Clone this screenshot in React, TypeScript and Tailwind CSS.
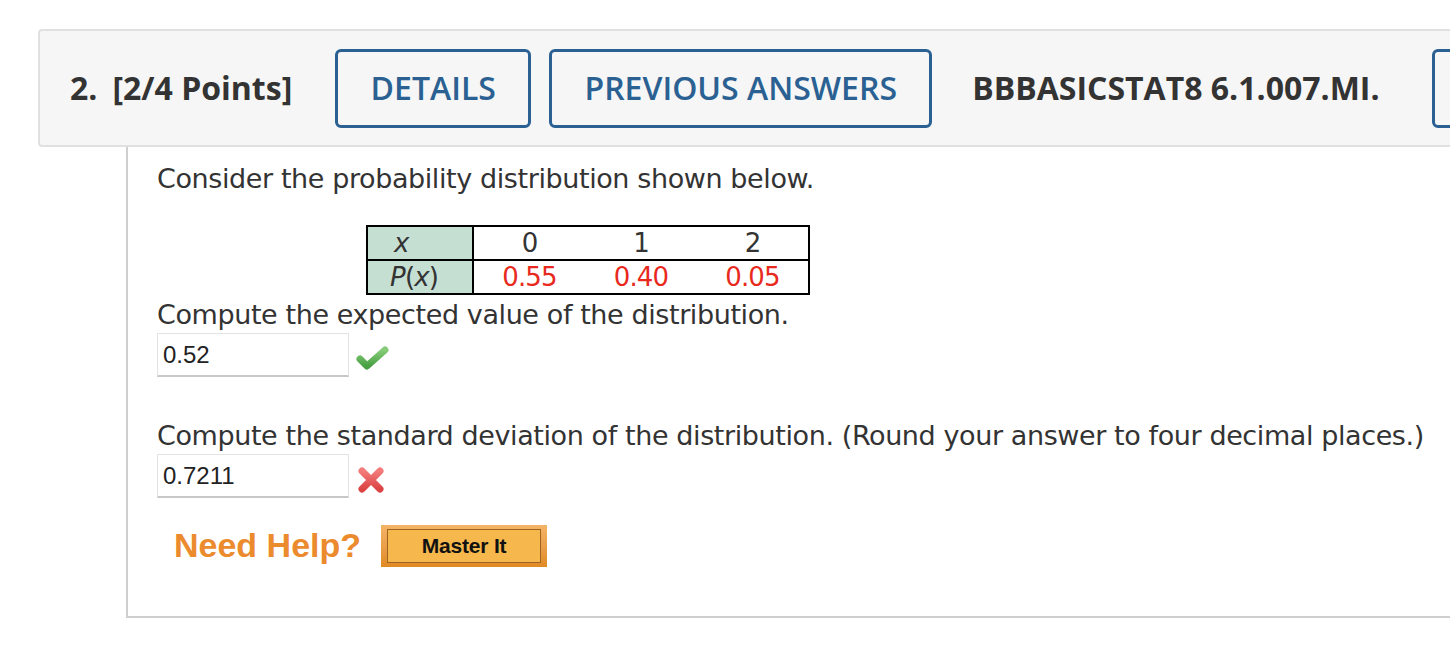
import React from "react";

const body = { fontFamily: '"DejaVu Sans", Verdana, sans-serif' };
const head = { fontFamily: '"Open Sans", "Liberation Sans", sans-serif' };
const arial = { fontFamily: '"Liberation Sans", Arial, sans-serif' };

function Check() {
  return (
    <svg width="34" height="28" viewBox="0 0 34 28">
      <defs>
        <linearGradient id="g" x1="0" y1="0" x2="0" y2="1">
          <stop offset="0" stopColor="#86cc78" />
          <stop offset="1" stopColor="#48a043" />
        </linearGradient>
      </defs>
      <path d="M4 14 L11 21 L29 5" fill="none" stroke="url(#g)" strokeWidth="7" strokeLinecap="round" strokeLinejoin="round" />
    </svg>
  );
}

function Cross() {
  return (
    <svg width="30" height="30" viewBox="0 0 30 30">
      <defs>
        <linearGradient id="r" x1="0" y1="0" x2="0" y2="1">
          <stop offset="0" stopColor="#f37b7b" />
          <stop offset="1" stopColor="#dc4444" />
        </linearGradient>
      </defs>
      <path d="M6 6 L24 24 M24 6 L6 24" fill="none" stroke="url(#r)" strokeWidth="7" strokeLinecap="round" />
    </svg>
  );
}

function Answer({ value, mark }: { value: string; mark: React.ReactNode }) {
  return (
    <div className="flex items-center gap-[7px]">
      <div
        className="w-[192px] h-[44px] border border-[#e3e3e3] border-b-2 border-b-[#c8c8c8] flex items-center pl-[5px] text-[24px] text-[#222]"
        style={arial}
      >
        {value}
      </div>
      <div className="mt-[8px]">{mark}</div>
    </div>
  );
}

export default function App() {
  return (
    <div className="w-[1450px] h-[646px] overflow-hidden bg-white relative">
      <div
        className="ml-[38px] mt-[29px] w-[1480px] h-[118px] bg-[#f6f6f6] border-2 border-[#e0e0e0] rounded-[4px] flex items-center whitespace-nowrap"
        style={head}
      >
        <div className="shrink-0 ml-[30px] text-[32px] font-bold text-[#333] flex gap-[15px]">
          <span>2.</span>
          <span>[2/4 Points]</span>
        </div>
        <div className="shrink-0 ml-[43px] w-[196px] h-[79px] border-[3px] border-[#2a6192] rounded-[6px] flex items-center justify-center text-[32px] font-semibold text-[#2a6192]">
          DETAILS
        </div>
        <div className="shrink-0 ml-[18px] w-[383px] h-[79px] border-[3px] border-[#2a6192] rounded-[6px] flex items-center justify-center text-[32px] font-semibold text-[#2a6192]">
          PREVIOUS ANSWERS
        </div>
        <div className="shrink-0 ml-[40px] text-[32px] font-bold text-[#333]">
          BBBASICSTAT8 6.1.007.MI.
        </div>
        <div className="shrink-0 ml-[52px] w-[120px] h-[79px] border-[3px] border-[#2a6192] rounded-[6px]" />
      </div>
      <div className="ml-[126px] w-[1400px] h-[471px] border-l-2 border-b-2 border-[#cfcfcf] pl-[29px] pt-[16px] text-[#333]" style={body}>
        <div className="text-[27px] leading-[32px] tracking-[-0.4px]">Consider the probability distribution shown below.</div>
        <table className="ml-[209px] mt-[30px] border-collapse border-2 border-black text-[26px] leading-[32px] tracking-[-0.8px]">
          <tbody>
            <tr>
              <td className="w-[106px] bg-[#c6dfd3] border-r-2 border-b-2 border-black pl-[26px] italic">x</td>
              <td className="w-[112px] text-center border-b-2 border-black">0</td>
              <td className="w-[112px] text-center border-b-2 border-black">1</td>
              <td className="w-[112px] text-center border-b-2 border-black">2</td>
            </tr>
            <tr>
              <td className="bg-[#c6dfd3] border-r-2 border-black pl-[22px]"><i>P</i>(<i>x</i>)</td>
              <td className="text-center text-[#e8291d]">0.55</td>
              <td className="text-center text-[#e8291d]">0.40</td>
              <td className="text-center text-[#e8291d]">0.05</td>
            </tr>
          </tbody>
        </table>
        <div className="text-[27px] leading-[32px] tracking-[-0.4px] mt-[4px]">Compute the expected value of the distribution.</div>
        <div className="mt-[2px]">
          <Answer value="0.52" mark={<Check />} />
        </div>
        <div className="text-[27px] leading-[32px] tracking-[-0.4px] mt-[43px]">
          Compute the standard deviation of the distribution. (Round your answer to four decimal places.)
        </div>
        <div className="mt-[2px]">
          <Answer value="0.7211" mark={<Cross />} />
        </div>
        <div className="flex items-center mt-[22px] ml-[17px]" style={arial}>
          <span className="text-[34px] font-bold text-[#eb8b2e]">Need Help?</span>
          <div className="ml-[20px] w-[166px] h-[42px] bg-gradient-to-b from-[#f4b466] to-[#e08a22] px-[6px] py-[4px]">
            <div className="w-full h-full bg-[#f6b84c] border border-[#9c6420] flex items-center justify-center text-[21px] font-bold text-[#111] tracking-[-0.2px]">
              Master It
            </div>
          </div>
        </div>
      </div>
    </div>
  );
}
